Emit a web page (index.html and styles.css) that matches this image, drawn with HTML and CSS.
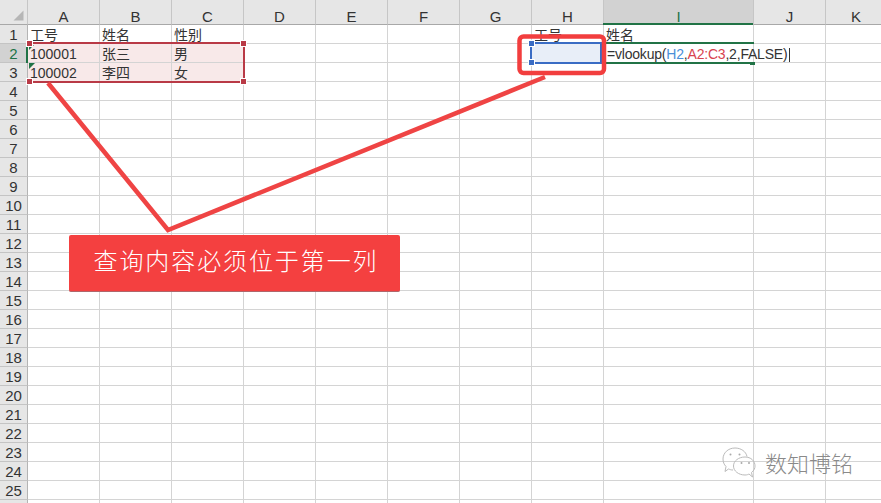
FILE: index.html
```html
<!DOCTYPE html>
<html lang="zh">
<head>
<meta charset="utf-8">
<title>vlookup</title>
<link rel="stylesheet" href="styles.css">
</head>
<body>
<div class="sheet">
<table class="grid">
<colgroup><col class="c-h"><col class="c-n"><col class="c-n"><col class="c-n"><col class="c-n"><col class="c-n"><col class="c-n"><col class="c-n"><col class="c-n"><col class="c-w"><col class="c-n"><col class="c-k"></colgroup>
<tr class="head"><th class="corner"><svg class="tri" width="11" height="11" viewBox="0 0 11 11"><path d="M10.500 .5V10.500H.5Z"/></svg></th><th>A</th><th>B</th><th>C</th><th>D</th><th>E</th><th>F</th><th>G</th><th>H</th><th class="active">I</th><th>J</th><th>K</th></tr>
<tr><th>1</th><td>工号</td><td>姓名</td><td>性别</td><td></td><td></td><td></td><td></td><td class="hidden-label">工号</td><td>姓名</td><td></td><td></td></tr>
<tr><th class="active-row">2</th><td class="sel">100001</td><td class="sel">张三</td><td class="sel">男</td><td></td><td></td><td></td><td></td><td class="blue"></td><td class="formula">=vlookup(<span class="f-blue">H2</span>,<span class="f-red">A2:C3</span>,2,FALSE)</td><td></td><td></td></tr>
<tr><th>3</th><td class="sel">100002</td><td class="sel">李四</td><td class="sel">女</td><td></td><td></td><td></td><td></td><td></td><td></td><td></td><td></td></tr>
<tr><th>4</th><td></td><td></td><td></td><td></td><td></td><td></td><td></td><td></td><td></td><td></td><td></td></tr>
<tr><th>5</th><td></td><td></td><td></td><td></td><td></td><td></td><td></td><td></td><td></td><td></td><td></td></tr>
<tr><th>6</th><td></td><td></td><td></td><td></td><td></td><td></td><td></td><td></td><td></td><td></td><td></td></tr>
<tr><th>7</th><td></td><td></td><td></td><td></td><td></td><td></td><td></td><td></td><td></td><td></td><td></td></tr>
<tr><th>8</th><td></td><td></td><td></td><td></td><td></td><td></td><td></td><td></td><td></td><td></td><td></td></tr>
<tr><th>9</th><td></td><td></td><td></td><td></td><td></td><td></td><td></td><td></td><td></td><td></td><td></td></tr>
<tr><th>10</th><td></td><td></td><td></td><td></td><td></td><td></td><td></td><td></td><td></td><td></td><td></td></tr>
<tr><th>11</th><td></td><td></td><td></td><td></td><td></td><td></td><td></td><td></td><td></td><td></td><td></td></tr>
<tr><th>12</th><td></td><td></td><td></td><td></td><td></td><td></td><td></td><td></td><td></td><td></td><td></td></tr>
<tr><th>13</th><td></td><td></td><td></td><td></td><td></td><td></td><td></td><td></td><td></td><td></td><td></td></tr>
<tr><th>14</th><td></td><td></td><td></td><td></td><td></td><td></td><td></td><td></td><td></td><td></td><td></td></tr>
<tr><th>15</th><td></td><td></td><td></td><td></td><td></td><td></td><td></td><td></td><td></td><td></td><td></td></tr>
<tr><th>16</th><td></td><td></td><td></td><td></td><td></td><td></td><td></td><td></td><td></td><td></td><td></td></tr>
<tr><th>17</th><td></td><td></td><td></td><td></td><td></td><td></td><td></td><td></td><td></td><td></td><td></td></tr>
<tr><th>18</th><td></td><td></td><td></td><td></td><td></td><td></td><td></td><td></td><td></td><td></td><td></td></tr>
<tr><th>19</th><td></td><td></td><td></td><td></td><td></td><td></td><td></td><td></td><td></td><td></td><td></td></tr>
<tr><th>20</th><td></td><td></td><td></td><td></td><td></td><td></td><td></td><td></td><td></td><td></td><td></td></tr>
<tr><th>21</th><td></td><td></td><td></td><td></td><td></td><td></td><td></td><td></td><td></td><td></td><td></td></tr>
<tr><th>22</th><td></td><td></td><td></td><td></td><td></td><td></td><td></td><td></td><td></td><td></td><td></td></tr>
<tr><th>23</th><td></td><td></td><td></td><td></td><td></td><td></td><td></td><td></td><td></td><td></td><td></td></tr>
<tr><th>24</th><td></td><td></td><td></td><td></td><td></td><td></td><td></td><td></td><td></td><td></td><td></td></tr>
<tr><th>25</th><td></td><td></td><td></td><td></td><td></td><td></td><td></td><td></td><td></td><td></td><td></td></tr>
<tr><th></th><td></td><td></td><td></td><td></td><td></td><td></td><td></td><td></td><td></td><td></td><td></td></tr>
</table>

<div class="row-mark"></div>
<svg class="err err-1" width="5" height="5" viewBox="0 0 5 5"><path d="M0 0H5L0 5Z"/></svg>
<svg class="err err-2" width="6" height="6" viewBox="0 0 6 6"><path d="M0 0H6L0 6Z"/></svg>

<div class="range-red"><i class="h tl"></i><i class="h tr"></i><i class="h bl"></i><i class="h br"></i></div>
<div class="range-blue"><i class="b tl"></i><i class="b bl"></i></div>
<div class="green g1"></div>
<div class="green g2"></div>
<div class="green g3"></div>
<div class="handle-green"></div>
<div class="caret"></div>

<svg class="notes" width="881" height="503" viewBox="0 0 881 503">
<path class="pointer" d="M48 83L168 230L545 77"/>
<rect class="hilite" x="519.500" y="36.500" width="84.500" height="36.500" rx="4"/>
</svg>

<div class="callout">查询内容必须位于第一列</div>

<div class="mark">
<svg class="wechat" width="34" height="34" viewBox="0 0 34 34"><path d="M11 25C9 25 8 24.500 6.500 24L3 26.500L4 21.500C2 19.500 1 17 1 14C1 8 6 3 13 3C19 3 24 6.500 25 11.500"/><path d="M23 12C16.500 12 11.500 16 11.500 21C11.500 26 16.500 30 23 30C25 30 26 29.500 27 29L30.500 32L29.500 27.500C32 25.500 33 23.500 33 21C33 16 29 12 23 12Z"/><circle cx="8.500" cy="9.500" r="1"/><circle cx="17.500" cy="9.500" r="1"/><circle cx="19.500" cy="18" r="1"/><circle cx="27" cy="18" r="1"/></svg>
<span class="mark-text">数知博铭</span>
</div>
</div>
</body>
</html>
```
FILE: styles.css
```css
html, body { margin: 0; padding: 0; background: #fff; }
.sheet { position: relative; width: 881px; height: 503px; overflow: hidden; background: #fff; font-family: "Liberation Sans", "Noto Sans CJK SC", sans-serif; }

.grid { border-collapse: separate; border-spacing: 0; table-layout: fixed; width: 881px; font-size: 14px; color: #333; }
.c-h { width: 28px; }
.c-n { width: 72px; }
.c-w { width: 150px; }
.c-k { width: 61px; }
.grid tr { height: 19px; }
.grid td, .grid th { padding: 3px 0 0; height: 15px; border-right: 1px solid #d4d4d4; border-bottom: 1px solid #d4d4d4; overflow: hidden; white-space: nowrap; line-height: 15px; box-sizing: content-box; }
.grid td { padding-left: 2px; text-align: left; font-weight: 400; overflow: visible; }
.grid th { padding-top: 2px; height: 16px; line-height: 16px; background: #e6e6e6; font-weight: normal; text-align: center; color: #333; border-right-color: #b4b4b4; border-bottom-color: #c4c4c4; font-size: 15px; }
.head { height: 25px !important; }
.grid .head th { padding-top: 3px; height: 21px; border-bottom: 1px solid #a8a8a8; border-right-color: #c6c6c6; vertical-align: bottom; line-height: 15px; }
.corner { position: relative; }
.tri { position: absolute; left: 13px; top: 10px; }
.tri path { fill: #b6b6b6; }
.active { background: #d2d2d2 !important; color: #217346 !important; }
.active-row { background: #d2d2d2 !important; color: #217346 !important; }
.sel { background: #f8e9e9; }
.blue { background: #e8eef8; }
.grid .formula { color: #333; padding-left: 3px; letter-spacing: -0.2px; }
.f-blue { color: #4a8fd8; }
.f-red { color: #d8434f; }

.row-mark { position: absolute; left: 26px; top: 43px; width: 2px; height: 20px; background: #217346; }
.err { position: absolute; fill: #217346; }
.err-1 { left: 29px; top: 45px; }
.err-2 { left: 29px; top: 63px; }

.range-red { position: absolute; left: 28px; top: 42px; width: 217px; height: 41px; border: 2px solid #b93a46; border-left-width: 0; box-sizing: border-box; }
.h { position: absolute; width: 5px; height: 5px; background: #b93a46; outline: 1px solid #fff; }
.tl { left: -1px; top: -3px; }
.tr { right: -3px; top: -3px; }
.bl { left: -1px; bottom: -3px; }
.br { right: -3px; bottom: -3px; }

.range-blue { position: absolute; left: 530px; top: 42px; width: 72px; height: 22px; border: 2px solid #3a6cc4; box-sizing: border-box; }
.b { position: absolute; width: 5px; height: 5px; background: #3a6cc4; outline: 1px solid #fff; }
.b.tl { left: -3px; top: -3px; }
.b.bl { left: -3px; bottom: -3px; }

.green { position: absolute; background: #217346; height: 2px; left: 603px; }
.g1 { top: 23px; width: 150px; }
.g2 { top: 42px; width: 151px; }
.g3 { top: 62px; width: 148px; }
.handle-green { position: absolute; left: 750px; top: 62px; width: 5px; height: 3px; background: #217346; }
.caret { position: absolute; left: 789px; top: 48px; width: 1px; height: 14px; background: #333; }

.notes { position: absolute; left: 0; top: 0; pointer-events: none; }
.pointer { fill: none; stroke: #ef4444; stroke-width: 4.500; stroke-linejoin: miter; }
.hilite { fill: none; stroke: #f23e3e; stroke-width: 4.500; }

.callout { position: absolute; left: 69px; top: 235px; width: 331px; height: 57px; padding-left: 3px; background: #f44040; border-radius: 2px; border-bottom: 1px solid #b0666a; box-sizing: border-box; color: #fff; font-family: "Noto Sans CJK SC", sans-serif; font-weight: 300; font-size: 24px; letter-spacing: 1.9px; line-height: 50px; text-align: center; }

.mark { position: absolute; left: 722px; top: 445px; display: flex; align-items: center; gap: 9px; }
.wechat { fill: none; stroke: #bbb; stroke-width: 1; }
.wechat circle { fill: #aaa; stroke: none; }
.mark-text { font-family: "Noto Sans CJK SC", sans-serif; font-size: 22px; color: #8a8a8a; font-weight: 300; }
```
